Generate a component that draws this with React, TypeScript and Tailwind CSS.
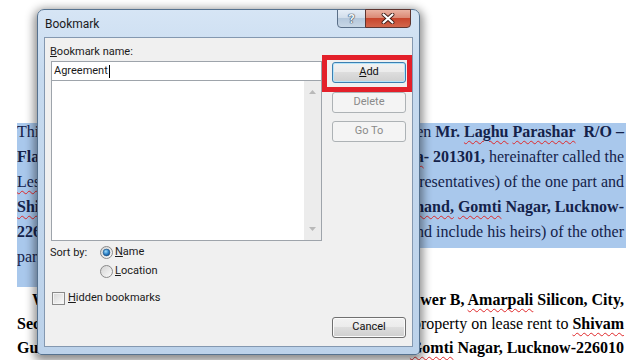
import React from "react";

const wavy = "underline decoration-wavy decoration-[#e0282a] decoration-1 underline-offset-[3px]";

function Row({
  left,
  right,
  className,
}: {
  left?: React.ReactNode;
  right?: React.ReactNode;
  className?: string;
}) {
  return (
    <div className={`ml-[17px] flex leading-[18px] ${className ?? ""}`}>
      <div className="w-[60px] shrink-0 overflow-hidden whitespace-nowrap">{left}</div>
      <div className="flex min-w-0 flex-1 justify-end overflow-hidden whitespace-nowrap pr-[2px]">
        <span className="shrink-0">{right}</span>
      </div>
    </div>
  );
}

function Radio({ checked }: { checked?: boolean }) {
  return (
    <svg width="13" height="13" viewBox="0 0 13 13" className="shrink-0">
      <defs>
        <linearGradient id="radioFill" x1="0" y1="0" x2="1" y2="1">
          <stop offset="0" stopColor="#d2d2d2" />
          <stop offset="1" stopColor="#fcfcfc" />
        </linearGradient>
        <radialGradient id="radioDot" cx="0.4" cy="0.35" r="0.75">
          <stop offset="0" stopColor="#9edcfb" />
          <stop offset="0.55" stopColor="#2c80c6" />
          <stop offset="1" stopColor="#134a82" />
        </radialGradient>
      </defs>
      <circle cx="6.5" cy="6.5" r="6" fill="url(#radioFill)" stroke="#8a8a8a" />
      {checked && <circle cx="6.5" cy="6.5" r="3.4" fill="url(#radioDot)" stroke="#1d4f7e" strokeWidth="0.6" />}
    </svg>
  );
}

function Btn({ children, kind = "normal" }: { children: React.ReactNode; kind?: "normal" | "default" | "disabled" }) {
  if (kind === "disabled") {
    return (
      <div className="flex h-[21px] w-[74px] items-center justify-center rounded-[3px] border border-[#adb2b5] bg-[#f4f4f4] text-[#8a8a8a]">
        {children}
      </div>
    );
  }
  const border = kind === "default" ? "border-[#3c7fb1] shadow-[inset_0_0_0_1px_#b5e4fa]" : "border-[#707070] shadow-[inset_0_0_0_1px_#fbfbfb]";
  return (
    <div
      className={`flex h-[21px] w-[74px] items-center justify-center rounded-[3px] border ${border} bg-[linear-gradient(180deg,#f2f2f2_0%,#ebebeb_50%,#dddddd_50%,#cfcfcf_100%)] text-[#111]`}
    >
      {children}
    </div>
  );
}

function Dialog() {
  return (
    <div className="absolute left-[37px] top-[9px] flex h-[346px] w-[383px] flex-col rounded-t-[7px] rounded-b-[4px] border border-[#56728f] bg-[linear-gradient(180deg,#d6e5f5_0%,#c6daef_20%,#bcd2ea_100%)] shadow-[0_3px_10px_3px_rgba(0,0,0,0.45)] font-['Segoe_UI',Roboto,sans-serif]">
      <div className="flex h-[27px] items-start justify-between">
        <span className="ml-[7px] self-center text-[12px] text-[#1b1b1b]">Bookmark</span>
        <div className="mr-[8px] -mt-[1px] flex">
          <div className="flex h-[19px] w-[29px] items-center justify-center rounded-bl-[4px] border border-[#5a6f88] bg-[linear-gradient(180deg,#e6eef7_0%,#d2deeb_45%,#b5c8dc_50%,#c8d7e6_100%)]">
            <span className="text-[13px] font-bold leading-none text-[#eef3f8] [text-shadow:0_0_1px_#2f4259,0_0_1px_#2f4259,0_0_1px_#2f4259]">
              ?
            </span>
          </div>
          <div className="-ml-px flex h-[19px] w-[46px] items-center justify-center rounded-br-[4px] border border-[#5e3530] bg-[linear-gradient(180deg,#eab2a2_0%,#db8a76_45%,#c8462d_50%,#d2664b_100%)]">
            <svg width="14" height="11" viewBox="0 0 14 11">
              <path d="M2.5 1.5 L11.5 9.5 M11.5 1.5 L2.5 9.5" stroke="#3a1a14" strokeWidth="3.8" strokeLinecap="round" />
              <path d="M2.5 1.5 L11.5 9.5 M11.5 1.5 L2.5 9.5" stroke="#ffffff" strokeWidth="2.2" strokeLinecap="round" />
            </svg>
          </div>
        </div>
      </div>

      <div className="mx-[6px] flex h-[310px] border border-[#8498b0] bg-[#f0f0f0] px-[6px] text-[11px] text-[#1a1a1a]">
        <div className="flex w-[271px] flex-col">
          <div className="-ml-px mt-[7px] h-[14px] leading-[14px]">
            <span className="underline">B</span>ookmark name:
          </div>
          <div className="mt-[2px] flex h-[20px] items-center border border-[#9ea4ab] bg-white pl-[2px]">
            <span>Agreement</span>
            <span className="ml-px h-[13px] w-px bg-black" />
          </div>
          <div className="flex h-[160px] justify-end border-x border-b border-[#9ea4ab] bg-white">
            <div className="flex w-[17px] flex-col items-center justify-between bg-[#ececec] py-[9px]">
              <svg width="7" height="4" viewBox="0 0 7 4">
                <path d="M0 4 L3.5 0 L7 4 Z" fill="#b9b9b9" />
              </svg>
              <svg width="7" height="4" viewBox="0 0 7 4">
                <path d="M0 0 L3.5 4 L7 0 Z" fill="#b9b9b9" />
              </svg>
            </div>
          </div>
          <div className="mt-[2px] flex">
            <div className="-ml-px w-[50px] leading-[19px]">Sort by:</div>
            <div className="flex flex-col">
              <div className="flex h-[19px] items-center gap-[2px]">
                <Radio checked />
                <span>
                  <span className="underline">N</span>ame
                </span>
              </div>
              <div className="flex h-[19px] items-center gap-[2px]">
                <Radio />
                <span>
                  <span className="underline">L</span>ocation
                </span>
              </div>
            </div>
          </div>
          <div className="mt-[8px] flex h-[19px] items-center gap-[3px] pl-px">
            <div className="h-[13px] w-[13px] border border-[#8a8a8a] bg-[linear-gradient(135deg,#d6d6d6,#fbfbfb)] shadow-[inset_0_0_0_1px_#f4f4f4]" />
            <span>
              <span className="underline">H</span>idden bookmarks
            </span>
          </div>
        </div>

        <div className="ml-[10px] flex flex-col">
          <div className="mt-[24px]">
            <Btn kind="default">
              <span>
                <span className="underline">A</span>dd
              </span>
            </Btn>
          </div>
          <div className="mt-[9px]">
            <Btn kind="disabled">Delete</Btn>
          </div>
          <div className="mt-[8px]">
            <Btn kind="disabled">Go To</Btn>
          </div>
          <div className="mb-[8px] mt-auto">
            <Btn>Cancel</Btn>
          </div>
        </div>
      </div>
    </div>
  );
}

export default function App() {
  return (
    <div className="relative h-[360px] w-[626px] overflow-hidden bg-white font-['Liberation_Serif','Times_New_Roman',serif] text-[16px] text-black">
      <div className="h-[123px]" />
      <div className="text-[#14224a]">
        <Row
          className="h-[25px] bg-[#a9c8ec]"
          left={<span>Thi</span>}
          right={
            <span>
              en <b>Mr. <span className={wavy}>Laghu</span> <span className={wavy}>Parashar</span>{"\u00a0 "}R/O –</b>
            </span>
          }
        />
        <Row
          className="h-[25px] bg-[#a9c8ec]"
          left={<b>Fla</b>}
          right={
            <span>
              <b>
                <span className={wavy}>a</span>- 201301,
              </b>{" "}
              hereinafter called the
            </span>
          }
        />
        <Row
          className="h-[25px] bg-[#a9c8ec]"
          left={<span className={wavy}>Les</span>}
          right={<span>presentatives) of the one part and</span>}
        />
        <Row
          className="h-[25px] bg-[#a9c8ec]"
          left={<b className={wavy}>Shi</b>}
          right={
            <b>
              <span className={wavy}>hand,</span> <span className={wavy}>Gomti</span> Nagar, Lucknow-
            </b>
          }
        />
        <Row
          className="h-[25px] bg-[#a9c8ec]"
          left={<b>226</b>}
          right={<span>nd include his heirs) of the other</span>}
        />
        <Row className="h-[39px]" left={<div className="h-[39px] bg-[#a9c8ec]">par</div>} />
      </div>
      <div className="mt-[4px]">
        <Row
          className="h-[24px]"
          left={<b className="pl-[15px]">W</b>}
          right={
            <b>
              ower B, <span className={wavy}>Amarpali</span> Silicon, City,
            </b>
          }
        />
        <Row
          className="h-[24px]"
          left={<b>Sec</b>}
          right={
            <span>
              property on lease rent to <b className={wavy}>Shivam</b>
            </span>
          }
        />
        <Row
          className="h-[24px]"
          left={<b>Gu</b>}
          right={
            <b>
              <span className={wavy}>Gomti</span> Nagar, Lucknow-226010
            </b>
          }
        />
      </div>

      <Dialog />

      <div className="absolute left-[322px] top-[55px] h-[37px] w-[90px] border-[5px] border-[#e3202a]" />
    </div>
  );
}
